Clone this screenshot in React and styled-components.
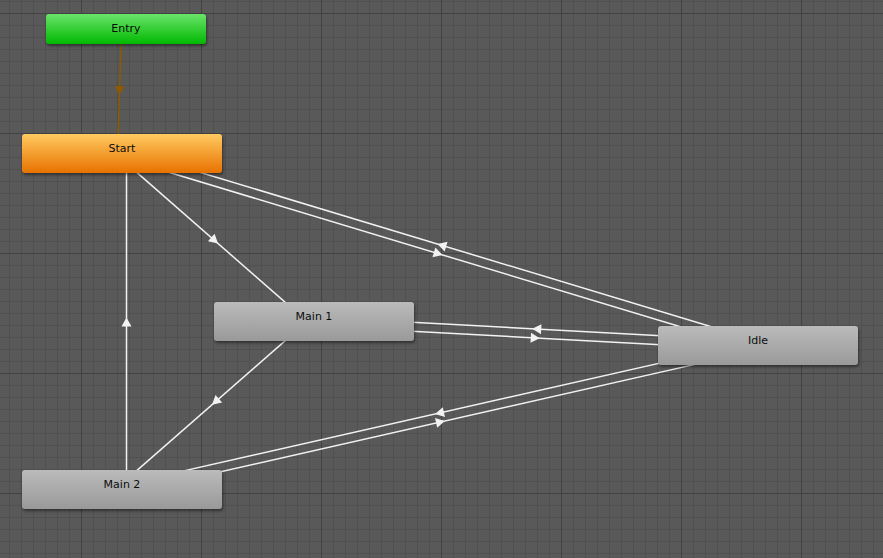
import styled, { createGlobalStyle } from "styled-components";

const GlobalStyle = createGlobalStyle`
  html, body {
    margin: 0;
    padding: 0;
    background: #595959;
    overflow: hidden;
  }
`;

const Canvas = styled.div`
  position: relative;
  width: 883px;
  height: 558px;
  overflow: hidden;
  background-color: #595959;
  background-image:
    linear-gradient(to right, #424242 1px, transparent 1px),
    linear-gradient(to bottom, #424242 1px, transparent 1px),
    linear-gradient(to right, #505050 1px, transparent 1px),
    linear-gradient(to bottom, #505050 1px, transparent 1px);
  background-size: 120px 120px, 120px 120px, 12px 12px, 12px 12px;
  background-position: 81px 0, 0 13px, 9px 0, 0 1px;
  font-family: "DejaVu Sans", Verdana, sans-serif;
`;

const EdgeLayer = styled.svg`
  position: absolute;
  left: 0;
  top: 0;
  width: 883px;
  height: 558px;
`;

const gradients = {
  entry: "linear-gradient(to bottom, #6ae36a, #02b902)",
  start: "linear-gradient(to bottom, #ffca60, #e87200)",
  normal: "linear-gradient(to bottom, #bbbbbb, #999999)",
};

const StateNode = styled.div`
  position: absolute;
  left: ${(p) => p.$x}px;
  top: ${(p) => p.$y}px;
  width: ${(p) => p.$w}px;
  height: ${(p) => p.$h}px;
  box-sizing: border-box;
  padding-top: 8px;
  border-radius: 3px;
  background: ${(p) => gradients[p.$kind]};
  box-shadow: 1px 2px 3px rgba(0, 0, 0, 0.45);
  color: #0c0c0c;
  font-size: 11px;
  line-height: 14px;
  text-align: center;
`;

const nodes = {
  entry: { label: "Entry", kind: "entry", x: 46, y: 14, w: 160, h: 30 },
  start: { label: "Start", kind: "start", x: 22, y: 134, w: 200, h: 39 },
  main1: { label: "Main 1", kind: "normal", x: 214, y: 302, w: 200, h: 39 },
  idle: { label: "Idle", kind: "normal", x: 658, y: 326, w: 200, h: 39 },
  main2: { label: "Main 2", kind: "normal", x: 22, y: 470, w: 200, h: 39 },
};

const transitions = [
  ["entry", "start", "#8c5a00"],
  ["start", "main1"],
  ["start", "idle"],
  ["idle", "start"],
  ["main1", "idle"],
  ["idle", "main1"],
  ["main1", "main2"],
  ["main2", "idle"],
  ["idle", "main2"],
  ["main2", "start"],
];

const center = (n) => [n.x + n.w / 2, n.y + n.h / 2];

const Transition = ({ from, to, color = "#f2f2f2" }) => {
  const [x1, y1] = center(nodes[from]);
  const [x2, y2] = center(nodes[to]);
  const len = Math.hypot(x2 - x1, y2 - y1);
  const dx = (x2 - x1) / len;
  const dy = (y2 - y1) / len;
  // offset to the clockwise side so two-way links sit side by side
  const px = -dy;
  const py = dx;
  const off = 4.5;
  const ax = x1 + px * off;
  const ay = y1 + py * off;
  const bx = x2 + px * off;
  const by = y2 + py * off;
  const mx = (ax + bx) / 2;
  const my = (ay + by) / 2;
  const tip = [mx + dx * 4, my + dy * 4];
  const l = [mx - dx * 5 + px * 5, my - dy * 5 + py * 5];
  const r = [mx - dx * 5 - px * 5, my - dy * 5 - py * 5];

  return (
    <g>
      <line x1={ax} y1={ay} x2={bx} y2={by} stroke={color} strokeWidth="1.5" />
      <polygon points={[tip, l, r].map((p) => p.join(",")).join(" ")} fill={color} />
    </g>
  );
};

export default function App() {
  return (
    <>
      <GlobalStyle />
      <Canvas>
        <EdgeLayer viewBox="0 0 883 558">
          {transitions.map(([from, to, color]) => (
            <Transition key={from + to} from={from} to={to} color={color} />
          ))}
        </EdgeLayer>
        {Object.entries(nodes).map(([id, n]) => (
          <StateNode key={id} $kind={n.kind} $x={n.x} $y={n.y} $w={n.w} $h={n.h}>
            {n.label}
          </StateNode>
        ))}
      </Canvas>
    </>
  );
}
